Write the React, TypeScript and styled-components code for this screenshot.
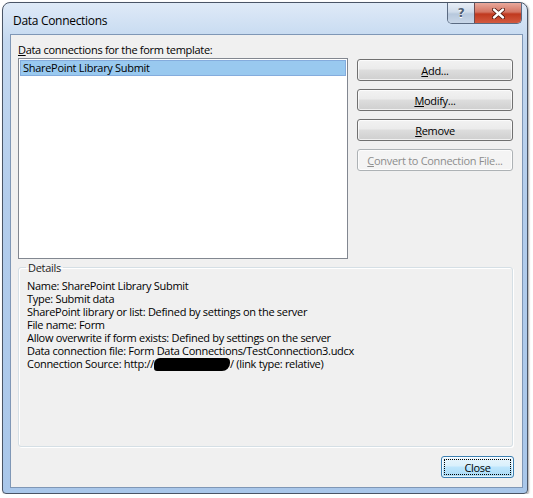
import styled, { createGlobalStyle } from "styled-components";

const GlobalStyle = createGlobalStyle`
    html, body {
        margin: 0;
        padding: 0;
        background: #ffffff;
    }
    body {
        font-family: "Open Sans", "Noto Sans", sans-serif;
        font-size: 11px;
        letter-spacing: -0.3px;
        color: #000;
    }
`;

const Window = styled.div`
    box-sizing: border-box;
    margin: 2px 0 0 2px;
    width: 526px;
    height: 492px;
    border: 1px solid #4a5566;
    border-radius: 8px 8px 4px 4px;
    background: linear-gradient(180deg, #dfeaf7 0%, #c3d8f0 8%, #b3cdec 40%, #a9c7ea 100%);
    box-shadow: 1px 1px 2px rgba(0, 0, 0, 0.35);
    display: flex;
    flex-direction: column;
    padding: 0 4px 5px 7px;
`;

const TitleBar = styled.div`
    height: 31px;
    display: flex;
    align-items: flex-start;
    justify-content: space-between;
`;

const Title = styled.div`
    margin: 9px 0 0 3px;
    font-size: 12px;
    letter-spacing: -0.3px;
    color: #000;
`;

const CaptionButtons = styled.div`
    display: flex;
    margin-right: 1px;
    border: 1px solid #5b6b82;
    border-top: none;
    border-radius: 0 0 5px 5px;
    overflow: hidden;
    height: 20px;
`;

const CaptionButton = styled.div<{ $close?: boolean }>`
    display: flex;
    align-items: center;
    justify-content: center;
    width: ${(p) => (p.$close ? "46px" : "26px")};
    height: 20px;
    font-family: "DejaVu Sans", sans-serif;
    font-weight: bold;
    font-size: 12px;
    color: ${(p) => (p.$close ? "#ffffff" : "#4f5f75")};
    text-shadow: ${(p) => (p.$close ? "0 0 2px #6a1a10" : "0 1px 0 #ffffff")};
    background: ${(p) =>
        p.$close
            ? "linear-gradient(180deg, #e9a99c 0%, #d47563 45%, #c0391f 55%, #d35a3f 100%)"
            : "linear-gradient(180deg, #e8eef6 0%, #cfdbea 45%, #b7c8dd 55%, #c9d7e8 100%)"};
    border-left: ${(p) => (p.$close ? "1px solid #6d4b50" : "none")};
`;

const Client = styled.div`
    flex: 1;
    border: 1px solid #7f97b6;
    background: #f0f0f0;
    padding: 7px 8px 8px 7px;
    display: flex;
    flex-direction: column;
`;

const Label = styled.div`
    line-height: 15px;
    height: 16px;
`;

const Underline = styled.span`
    text-decoration: underline;
`;

const TopRow = styled.div`
    display: flex;
    gap: 9px;
`;

const ListBox = styled.div`
    box-sizing: border-box;
    width: 330px;
    height: 201px;
    background: #ffffff;
    border: 1px solid #828790;
    padding: 1px;
`;

const ListItem = styled.div<{ $selected?: boolean }>`
    height: 14px;
    line-height: 14px;
    padding-left: 2px;
    background: ${(p) => (p.$selected ? "#99c9ef" : "transparent")};
    border: 1px solid ${(p) => (p.$selected ? "#84acdd" : "transparent")};
`;

const ButtonColumn = styled.div`
    display: flex;
    flex-direction: column;
    gap: 8px;
    padding-top: 1px;
`;

const Button = styled.div<{ $disabled?: boolean; $width?: number; $focused?: boolean }>`
    box-sizing: border-box;
    width: ${(p) => p.$width ?? 156}px;
    height: 22px;
    display: flex;
    align-items: center;
    justify-content: center;
    border-radius: 3px;
    color: ${(p) => (p.$disabled ? "#8d8d8d" : "#000")};
    border: 1px solid ${(p) => (p.$disabled ? "#adb2b5" : p.$focused ? "#3c7fb1" : "#707070")};
    background: ${(p) =>
        p.$disabled
            ? "#f4f4f4"
            : p.$focused
            ? "linear-gradient(180deg, #eaf6fd 0%, #d9f0fc 45%, #bee6fd 50%, #a7d9f5 100%)"
            : "linear-gradient(180deg, #f2f2f2 0%, #ebebeb 45%, #dddddd 50%, #cfcfcf 100%)"};
    box-shadow: inset 0 0 0 1px rgba(255, 255, 255, 0.7);
    position: relative;
`;

const FocusRing = styled.span`
    position: absolute;
    inset: 2px;
    border: 1px dotted #000;
    border-radius: 1px;
`;

const Details = styled.fieldset`
    margin: 1px 0 0 0;
    padding: 4px 8px 0 8px;
    width: 495px;
    box-sizing: border-box;
    height: 187px;
    border: 1px solid #d5dfe5;
    box-shadow: inset 1px 1px 0 #ffffff, 1px 1px 0 #ffffff;
    border-radius: 3px;
`;

const Legend = styled.legend`
    padding: 0 2px;
    color: #1c1c1c;
    margin-left: -1px;
`;

const DetailLine = styled.div`
    line-height: 13px;
    white-space: nowrap;
`;

const Redacted = styled.span`
    display: inline-block;
    width: 76px;
    height: 13px;
    vertical-align: -3px;
    background: #000;
    border-radius: 6px 4px 8px 3px;
`;

const Footer = styled.div`
    flex: 1;
    display: flex;
    justify-content: flex-end;
    align-items: flex-end;
    padding-bottom: 1px;
`;

function App() {
    return (
        <>
            <GlobalStyle />
            <Window>
                <TitleBar>
                    <Title>Data Connections</Title>
                    <CaptionButtons>
                        <CaptionButton>?</CaptionButton>
                        <CaptionButton $close>
                            <svg width="13" height="11" viewBox="0 0 13 11">
                                <path
                                    d="M2 1.5 L11 9.5 M11 1.5 L2 9.5"
                                    stroke="#4a1208"
                                    strokeWidth="4"
                                    strokeLinecap="round"
                                />
                                <path
                                    d="M2 1.5 L11 9.5 M11 1.5 L2 9.5"
                                    stroke="#ffffff"
                                    strokeWidth="2.4"
                                    strokeLinecap="round"
                                />
                            </svg>
                        </CaptionButton>
                    </CaptionButtons>
                </TitleBar>
                <Client>
                    <Label>
                        <Underline>D</Underline>ata connections for the form template:
                    </Label>
                    <TopRow>
                        <ListBox>
                            <ListItem $selected>SharePoint Library Submit</ListItem>
                        </ListBox>
                        <ButtonColumn>
                            <Button>
                                <Underline>A</Underline>dd...
                            </Button>
                            <Button>
                                <Underline>M</Underline>odify...
                            </Button>
                            <Button>
                                <Underline>R</Underline>emove
                            </Button>
                            <Button $disabled>
                                <Underline>C</Underline>onvert to Connection File...
                            </Button>
                        </ButtonColumn>
                    </TopRow>
                    <Details>
                        <Legend>Details</Legend>
                        <DetailLine>Name: SharePoint Library Submit</DetailLine>
                        <DetailLine>Type: Submit data</DetailLine>
                        <DetailLine>SharePoint library or list: Defined by settings on the server</DetailLine>
                        <DetailLine>File name: Form</DetailLine>
                        <DetailLine>Allow overwrite if form exists: Defined by settings on the server</DetailLine>
                        <DetailLine>Data connection file: Form Data Connections/TestConnection3.udcx</DetailLine>
                        <DetailLine>
                            Connection Source: http://<Redacted />/ (link type: relative)
                        </DetailLine>
                    </Details>
                    <Footer>
                        <Button $width={73} $focused>
                            <FocusRing />
                            Close
                        </Button>
                    </Footer>
                </Client>
            </Window>
        </>
    );
}

export default App;
